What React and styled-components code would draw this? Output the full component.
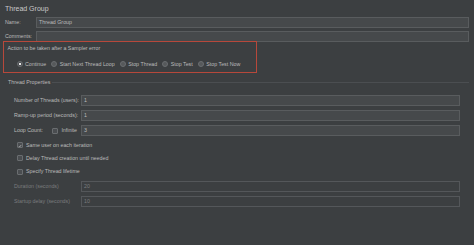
import React from 'react'
import styled, { createGlobalStyle } from 'styled-components'

const Global = createGlobalStyle`
  html, body {
    margin: 0;
    background: #3c3f41;
  }
  body {
    font-family: "Liberation Sans", Arial, sans-serif;
    color: #bbbbbb;
  }
`

const radios = ['Continue', 'Start Next Thread Loop', 'Stop Thread', 'Stop Test', 'Stop Test Now']

const Check = ({ checked }) => (
  <CheckBox>
    {checked && (
      <svg width="6" height="6" viewBox="0 0 6 6">
        <path d="M1.2 3.1 L2.5 4.4 L4.9 1.4" fill="none" stroke="#d0d0d0" strokeWidth="0.9" />
      </svg>
    )}
  </CheckBox>
)

const App = () => (
  <Page>
    <Global />
    <Title>Thread Group</Title>
    <TopRow>
      <Label>Name:</Label>
      <Input>Thread Group</Input>
    </TopRow>
    <TopRow style={{ marginTop: 3 }}>
      <Label>Comments:</Label>
      <Input />
    </TopRow>
    <ErrorBox>
      <Legend>Action to be taken after a Sampler error</Legend>
      <RadioRow>
        {radios.map((r, i) => (
          <RadioItem key={r}>
            <Radio selected={i === 0} />
            <span>{r}</span>
          </RadioItem>
        ))}
      </RadioRow>
    </ErrorBox>
    <Section>
      <SectionHead>
        <span>Thread Properties</span>
        <Rule />
      </SectionHead>
      <Rows>
        <Row>
          <Label>Number of Threads (users):</Label>
          <Input>1</Input>
        </Row>
        <Row>
          <Label>Ramp-up period (seconds):</Label>
          <Input>1</Input>
        </Row>
        <Row>
          <LoopLabel>
            <span>Loop Count:</span>
            <InlineCheck>
              <Check />
              <span>Infinite</span>
            </InlineCheck>
          </LoopLabel>
          <Input>3</Input>
        </Row>
      </Rows>
      <Checks>
        <CheckRow><Check checked /><span>Same user on each iteration</span></CheckRow>
        <CheckRow><Check /><span>Delay Thread creation until needed</span></CheckRow>
        <CheckRow><Check /><span>Specify Thread lifetime</span></CheckRow>
      </Checks>
      <Rows style={{ marginTop: 5 }}>
        <Row>
          <Label disabled>Duration (seconds)</Label>
          <Input disabled>20</Input>
        </Row>
        <Row>
          <Label disabled>Startup delay (seconds)</Label>
          <Input disabled>10</Input>
        </Row>
      </Rows>
    </Section>
  </Page>
)

const Page = styled.div`
  padding: 2px 5px 0 5px;
  font-size: 5.3px;
  line-height: 7px;
  height: 243px;
  box-sizing: border-box;
`

const Title = styled.div`
  font-size: 7px;
  line-height: 14px;
  height: 14px;
  color: #c9c9c9;
`

const TopRow = styled.div`
  display: grid;
  grid-template-columns: 31px 1fr;
  align-items: center;
  height: 11px;
  margin-top: 1px;
`

const Label = styled.span`
  white-space: nowrap;
  color: ${p => (p.disabled ? '#7a7c7e' : '#bbbbbb')};
`

const Input = styled.div`
  height: 11px;
  box-sizing: border-box;
  border: 1px solid ${p => (p.disabled ? '#54575a' : '#595c5e')};
  background: ${p => (p.disabled ? '#3c3f41' : '#46494b')};
  color: ${p => (p.disabled ? '#7a7c7e' : '#bbbbbb')};
  padding: 0 2px;
  line-height: 9px;
  white-space: nowrap;
`

const ErrorBox = styled.div`
  position: relative;
  margin: -1px 0 0 -2px;
  width: 254px;
  box-sizing: border-box;
  border: 1.5px solid #b7483b;
  padding: 3px 0 4px 0;
`

const Legend = styled.div`
  margin-left: 3.5px;
  height: 7px;
`

const RadioRow = styled.div`
  display: flex;
  align-items: center;
  gap: 5px;
  margin-top: 8px;
  height: 8px;
  padding-left: 12.5px;
`

const RadioItem = styled.div`
  display: flex;
  align-items: center;
  gap: 2.5px;
  white-space: nowrap;
`

const Radio = styled.span`
  width: 6px;
  height: 6px;
  border-radius: 50%;
  box-sizing: border-box;
  border: 0.5px solid #6a6d70;
  background: ${p => (p.selected ? 'radial-gradient(circle, #e6e6e6 0 1.2px, #4a4d50 1.5px)' : '#56595b')};
`

const Section = styled.div`
  margin-top: 5.5px;
  padding: 0 9px 0 3px;
`

const SectionHead = styled.div`
  display: flex;
  align-items: center;
  gap: 2px;
  height: 7px;
  padding-left: 0;
  white-space: nowrap;
`

const Rule = styled.div`
  flex: 1;
  height: 0;
  border-top: 1px solid #4b4e51;
  margin-right: -9px;
`

const Rows = styled.div`
  display: flex;
  flex-direction: column;
  gap: 4px;
  margin-top: 9.5px;
  padding-left: 6px;
`

const Row = styled.div`
  display: grid;
  grid-template-columns: 67px 1fr;
  align-items: center;
  height: 11px;
`

const LoopLabel = styled.div`
  display: flex;
  align-items: center;
  padding-right: 4px;
  white-space: nowrap;
`

const InlineCheck = styled.div`
  margin-left: auto;
  display: flex;
  align-items: center;
  gap: 3px;
`

const CheckBox = styled.span`
  display: inline-flex;
  width: 6px;
  height: 6px;
  box-sizing: border-box;
  border: 0.5px solid #6a6d70;
  border-radius: 1px;
  background: #4a4d50;
  flex: none;
`

const Checks = styled.div`
  display: flex;
  flex-direction: column;
  gap: 4.3px;
  margin-top: 4.5px;
  padding-left: 9px;
`

const CheckRow = styled.div`
  display: flex;
  align-items: center;
  gap: 3px;
  height: 9px;
  white-space: nowrap;
`

export default App
